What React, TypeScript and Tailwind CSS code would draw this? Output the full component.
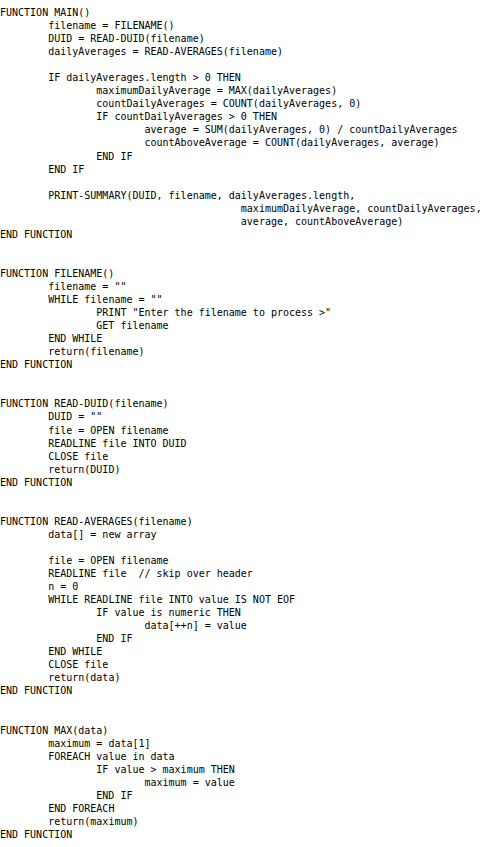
const code = `FUNCTION MAIN()
\tfilename = FILENAME()
\tDUID = READ-DUID(filename)
\tdailyAverages = READ-AVERAGES(filename)

\tIF dailyAverages.length > 0 THEN
\t\tmaximumDailyAverage = MAX(dailyAverages)
\t\tcountDailyAverages = COUNT(dailyAverages, 0)
\t\tIF countDailyAverages > 0 THEN
\t\t\taverage = SUM(dailyAverages, 0) / countDailyAverages
\t\t\tcountAboveAverage = COUNT(dailyAverages, average)
\t\tEND IF
\tEND IF

\tPRINT-SUMMARY(DUID, filename, dailyAverages.length,
\t\t\t\t\tmaximumDailyAverage, countDailyAverages,
\t\t\t\t\taverage, countAboveAverage)
END FUNCTION


FUNCTION FILENAME()
\tfilename = ""
\tWHILE filename = ""
\t\tPRINT "Enter the filename to process >"
\t\tGET filename
\tEND WHILE
\treturn(filename)
END FUNCTION


FUNCTION READ-DUID(filename)
\tDUID = ""
\tfile = OPEN filename
\tREADLINE file INTO DUID
\tCLOSE file
\treturn(DUID)
END FUNCTION


FUNCTION READ-AVERAGES(filename)
\tdata[] = new array

\tfile = OPEN filename
\tREADLINE file  // skip over header
\tn = 0
\tWHILE READLINE file INTO value IS NOT EOF
\t\tIF value is numeric THEN
\t\t\tdata[++n] = value
\t\tEND IF
\tEND WHILE
\tCLOSE file
\treturn(data)
END FUNCTION


FUNCTION MAX(data)
\tmaximum = data[1]
\tFOREACH value in data
\t\tIF value > maximum THEN
\t\t\tmaximum = value
\t\tEND IF
\tEND FOREACH
\treturn(maximum)
END FUNCTION`;

export default function App() {
  return (
    <div className="min-h-screen w-full bg-white">
      <pre className="m-0 pt-[6px] pl-0 font-['DejaVu_Sans_Mono',monospace] text-[10px] leading-[13.05px] text-black whitespace-pre [tab-size:8]">
        {code}
      </pre>
    </div>
  );
}
